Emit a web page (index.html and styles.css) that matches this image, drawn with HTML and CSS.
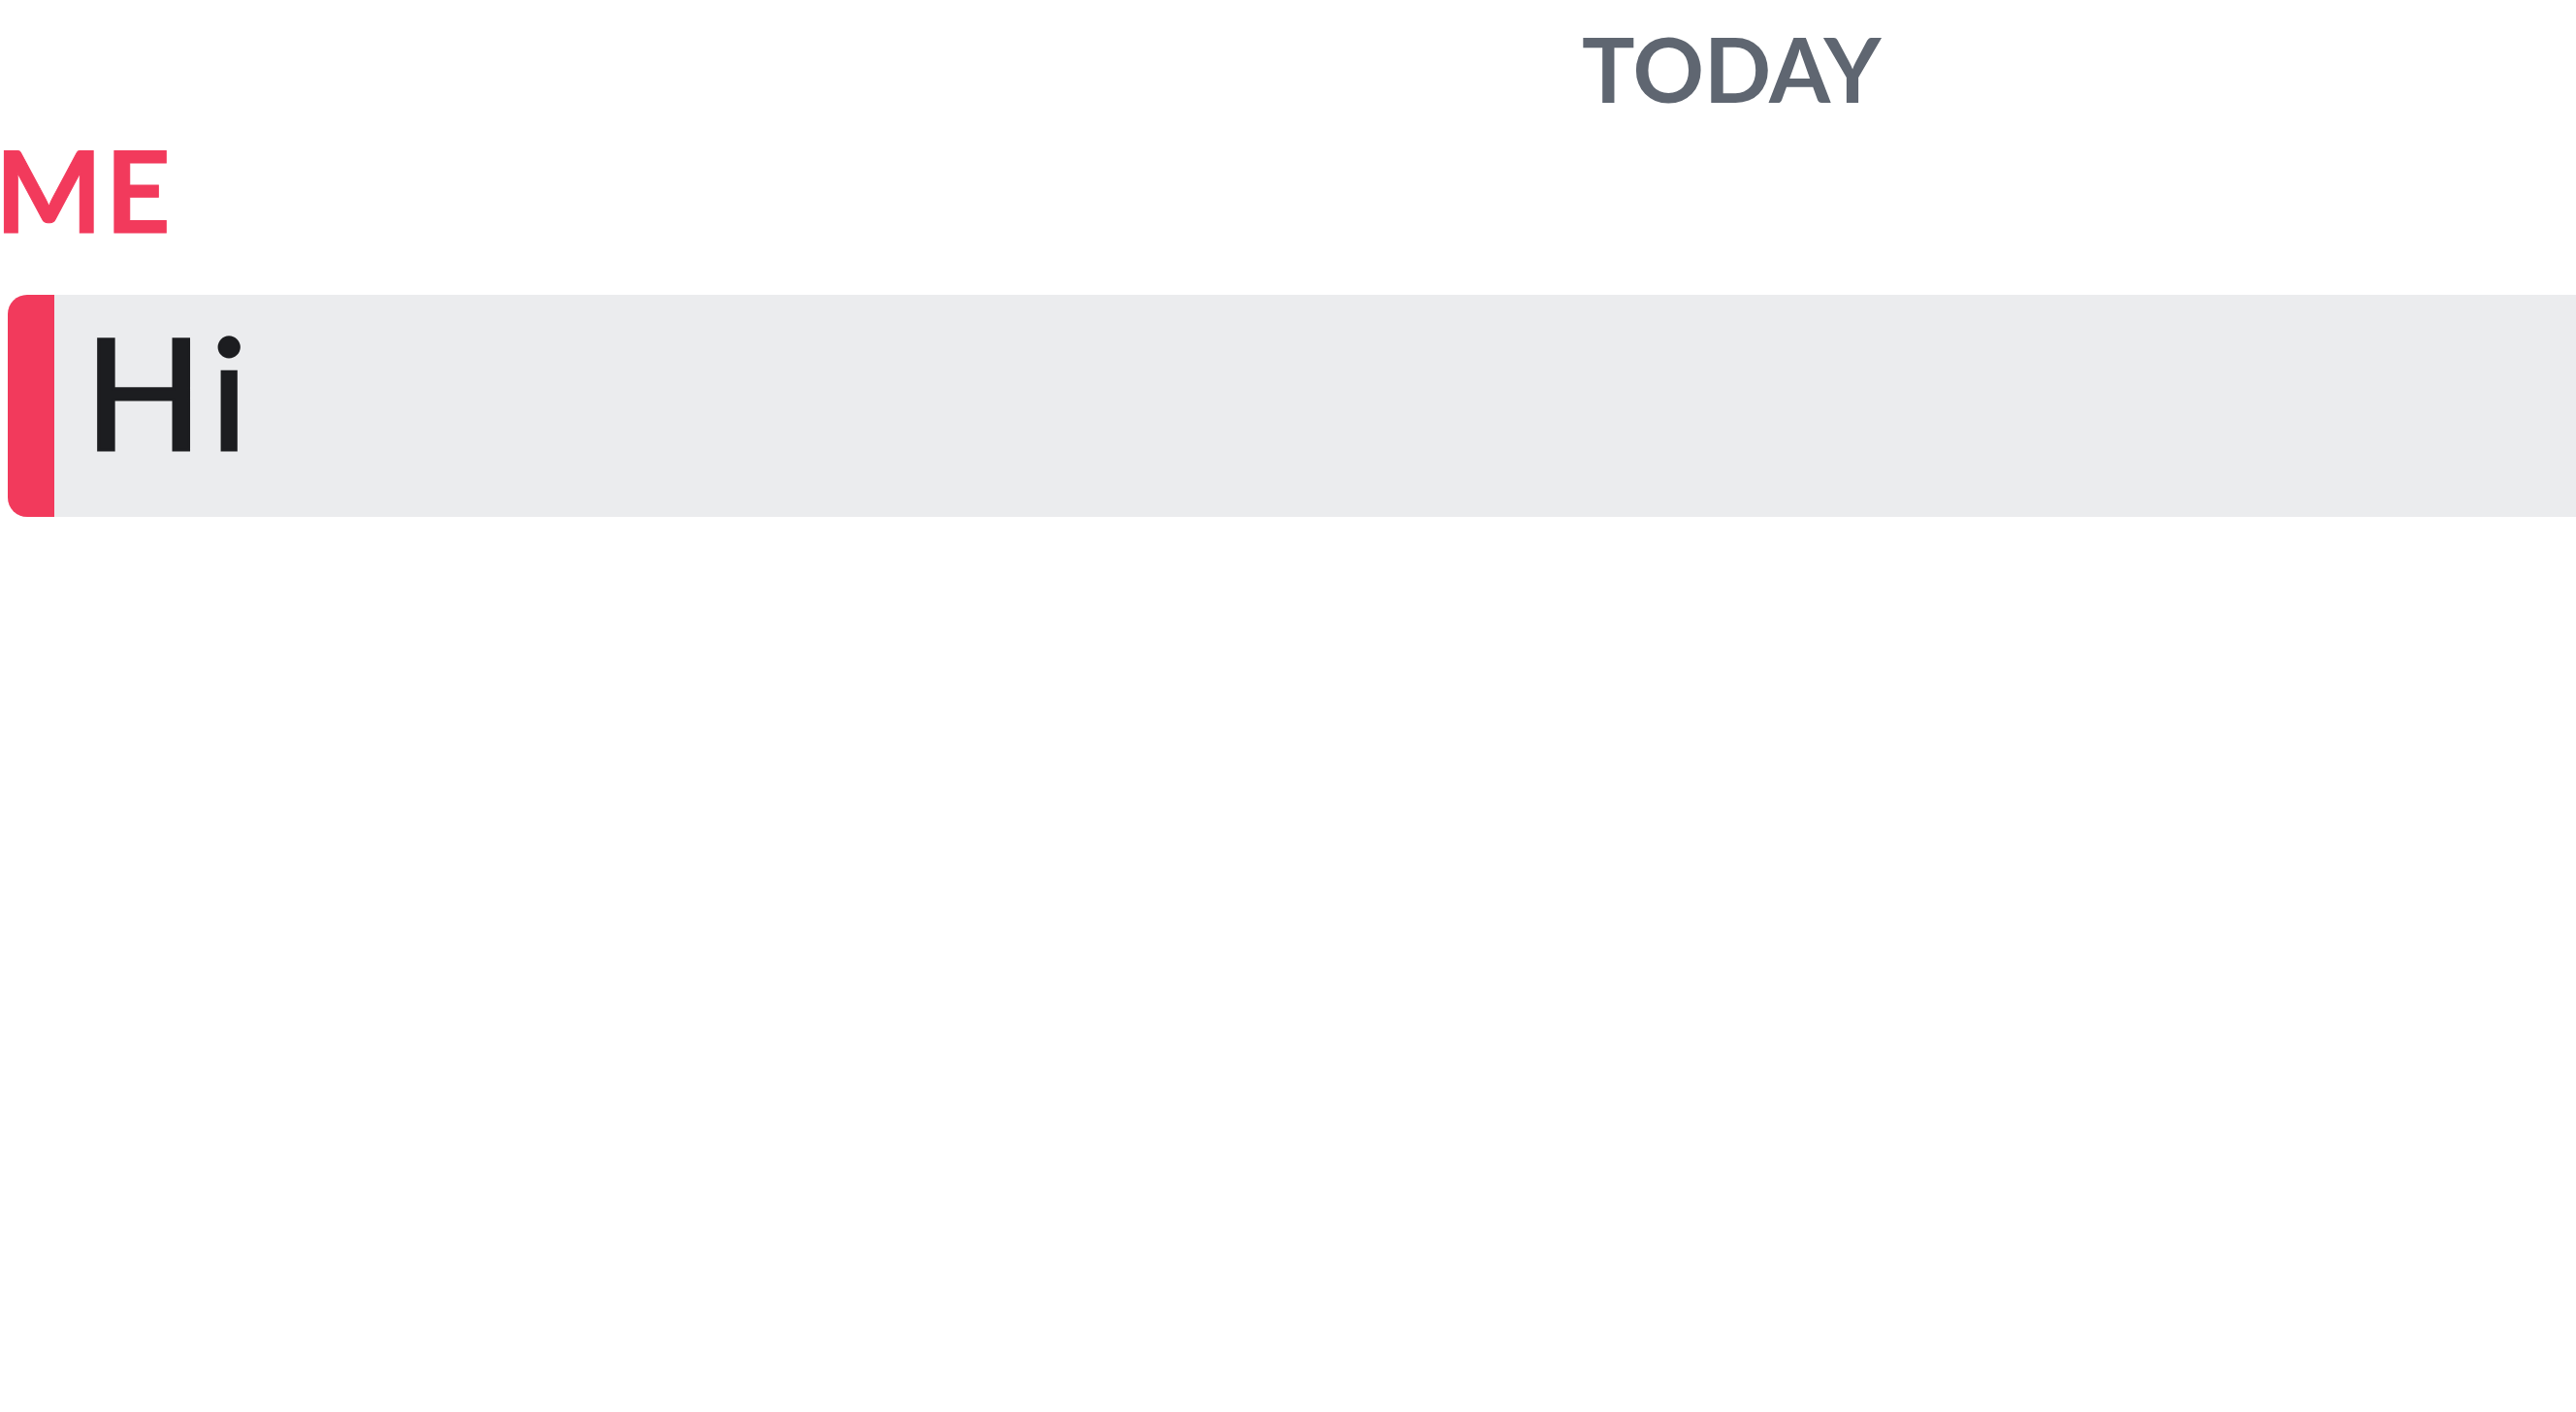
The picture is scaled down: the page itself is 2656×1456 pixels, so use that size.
FILE: index.html
```html
<!DOCTYPE html>
<html>
<head>
<meta charset="utf-8">
<link rel="stylesheet" href="styles.css">
</head>
<body>
<div class="page">
  <div class="day-label">TODAY</div>
  <div class="sender">ME</div>
  <div class="message">
    <div class="accent"></div>
    <div class="text">Hi</div>
  </div>
</div>
</body>
</html>
```
FILE: styles.css
```css
html, body {
  margin: 0;
  padding: 0;
  background: #ffffff;
}
.page {
  display: flex;
  flex-direction: column;
  font-family: Lato, "Open Sans", sans-serif;
}
.day-label {
  padding-top: 25px;
  padding-left: 1631px;
  font-size: 91px;
  line-height: 1;
  font-weight: 700;
  color: #5f6671;
}
.sender {
  margin-top: 21px;
  margin-left: -5px;
  font-size: 117px;
  line-height: 1;
  font-weight: 700;
  letter-spacing: 3px;
  -webkit-text-stroke: 1px #f23a5c;
  color: #f23a5c;
}
.message {
  margin-top: 50px;
  margin-left: 8px;
  display: flex;
  height: 229px;
  background: #ebecee;
  border-radius: 20px 0 0 20px;
}
.accent {
  width: 48px;
  flex: none;
  background: #f23a5c;
  border-radius: 20px 0 0 20px;
}
.text {
  padding-top: 18px;
  padding-left: 31px;
  font-size: 160px;
  line-height: 1;
  font-weight: 400;
  letter-spacing: 9px;
  -webkit-text-stroke: 3px #1c1d20;
  color: #1c1d20;
}
```
